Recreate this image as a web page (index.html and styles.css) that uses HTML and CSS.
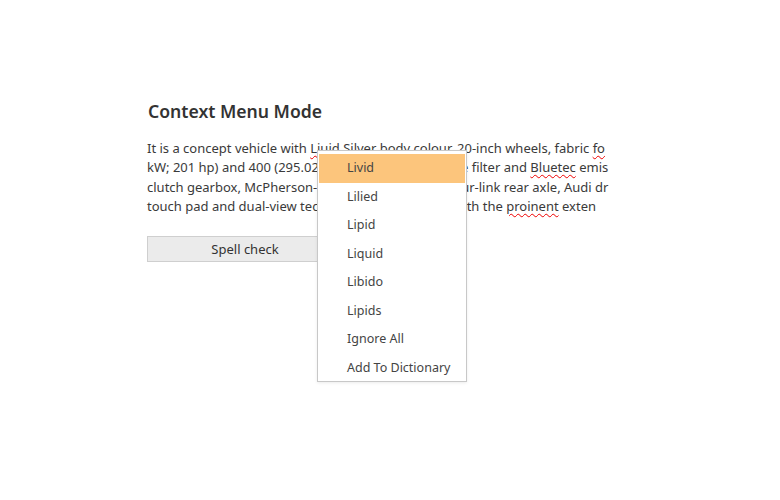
FILE: index.html
```html
<!DOCTYPE html>
<html>
<head>
<meta charset="utf-8">
<link rel="stylesheet" href="styles.css">
</head>
<body>
<div class="page">
  <div class="sample">
    <h2 class="title">Context Menu Mode</h2>
    <div class="editor">
      <div class="line">It is a concept vehicle with <span class="err">Liuid</span> Silver body colour, 20-inch wheels, fabric <span class="err">fo</span></div>
      <div class="line">kW; 201 hp) and 400 (295.02 lb·ft) of torque, a smoke filter and <span class="err">Bluetec</span> emis</div>
      <div class="line">clutch gearbox, McPherson-strut front axle and a four-link rear axle, Audi dr</div>
      <div class="line">touch pad and dual-view technology screen along with the <span class="err">proinent</span> exten</div>
    </div>
    <button class="btn">Spell check</button>
  </div>
  <ul class="menu">
    <li class="item active">Livid</li>
    <li class="item">Lilied</li>
    <li class="item">Lipid</li>
    <li class="item">Liquid</li>
    <li class="item">Libido</li>
    <li class="item">Lipids</li>
    <li class="item">Ignore All</li>
    <li class="item">Add To Dictionary</li>
  </ul>
</div>
</body>
</html>
```

FILE: styles.css
```css
html, body {
  margin: 0;
  padding: 0;
  background: #fff;
}
body {
  font-family: "Noto Sans", "Open Sans", sans-serif;
  color: #333;
}
.page {
  position: relative;
  width: 780px;
  height: 500px;
}
.sample {
  padding: 99px 0 0 147px;
  width: 460px;
}
.title {
  margin: 0 0 0 1px;
  font-size: 17.6px;
  font-weight: 600;
  line-height: 24px;
  color: #333;
}
.editor {
  margin-top: 16px;
  width: 460px;
  font-size: 13px;
  line-height: 19.3px;
  color: #3a3a3a;
}
.line {
  white-space: nowrap;
}
.err {
  text-decoration: underline wavy #e00;
  text-decoration-thickness: 1px;
  text-underline-offset: 2px;
}
.btn {
  display: block;
  margin-top: 20px;
  width: 196px;
  height: 26px;
  padding: 0;
  background: #ebebeb;
  border: 1px solid #cfcfcf;
  font-family: inherit;
  font-size: 13px;
  color: #333;
  text-align: center;
}
.menu {
  position: absolute;
  left: 317px;
  top: 150px;
  width: 150px;
  height: 232px;
  margin: 0;
  padding: 3px 1px 1px;
  list-style: none;
  background: #fff;
  border: 1px solid #c8c8c8;
  box-sizing: border-box;
  box-shadow: 0 1px 3px rgba(0,0,0,0.08);
}
.item {
  height: 28.5px;
  line-height: 28.5px;
  padding-left: 28px;
  font-size: 12.5px;
  color: #444;
}
.item.active {
  background: #fcc57c;
}
```
